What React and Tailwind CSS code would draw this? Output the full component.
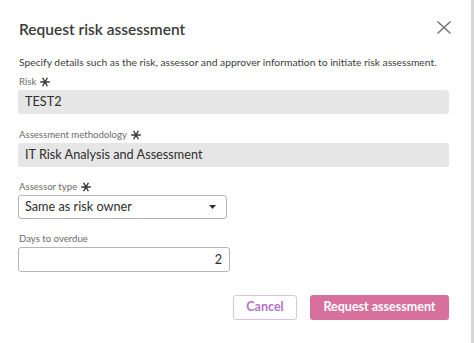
import React from "react";

const Star = () => (
  <svg width="10" height="10" viewBox="0 0 10 10" fill="none" stroke="#3a3a3a" strokeWidth="1.3" strokeLinecap="round">
    <path d="M0.6 5 H9.4 M2.8 1.2 L7.2 8.8 M7.2 1.2 L2.8 8.8" />
  </svg>
);

const Label = ({ children, required, className = "" }) => (
  <div className={`flex items-center gap-[4px] h-[10px] text-[9.6px] leading-none text-[#6b6b6b] ${className}`}>
    <span>{children}</span>
    {required && <Star />}
  </div>
);

const App = () => {
  return (
    <div
      className="w-[474px] h-[343px] bg-white border-r-[3px] border-[#d6d6d6] overflow-hidden"
      style={{ fontFamily: "Lato, 'Open Sans', sans-serif" }}
    >
      <div className="pl-[18px] pr-[22px]">
        <div className="flex items-start justify-between pt-[20px]">
          <h1 className="h-[20px] flex items-center pl-[1px] text-[15.5px] font-semibold text-[#3a3a3a] leading-none">
            Request risk assessment
          </h1>
          <button className="text-[#6f6f6f] mt-[1px] mr-[-2px]">
            <svg width="14" height="13" viewBox="0 0 14 13" fill="none" stroke="currentColor" strokeWidth="1.3">
              <path d="M0.5 0.5 L13.5 12.5 M13.5 0.5 L0.5 12.5" />
            </svg>
          </button>
        </div>

        <p className="mt-[16px] h-[12px] pl-[1px] flex items-center text-[10.3px] text-[#3c3c3c] leading-none whitespace-nowrap">
          Specify details such as the risk, assessor and approver information to initiate risk assessment.
        </p>

        <Label required className="mt-[9px] pl-[1px]">Risk</Label>
        <div className="mt-[3px] h-[24px] rounded-[3px] bg-[#e6e6e6] flex items-center px-[7px] text-[12.7px] text-[#2e2e2e]">
          TEST2
        </div>

        <Label required className="mt-[16px] pl-[1px]">Assessment methodology</Label>
        <div className="mt-[3px] h-[24px] rounded-[3px] bg-[#e6e6e6] flex items-center px-[7px] text-[12.7px] text-[#2e2e2e]">
          IT Risk Analysis and Assessment
        </div>

        <Label required className="mt-[15px] pl-[1px]">Assessor type</Label>
        <div className="mt-[3px] w-[209px] h-[24px] rounded-[3px] border border-[#b5b5b5] bg-white flex items-center justify-between pl-[6px] pr-[10px] text-[12.7px] text-[#2e2e2e]">
          <span>Same as risk owner</span>
          <svg width="7" height="4" viewBox="0 0 7 4">
            <path d="M0 0 L7 0 L3.5 4 Z" fill="#333" />
          </svg>
        </div>

        <Label className="mt-[15px] pl-[1px]">Days to overdue</Label>
        <div className="mt-[3px] w-[212px] h-[25px] rounded-[3px] border border-[#b5b5b5] bg-white flex items-center justify-end pr-[7px] text-[12.7px] text-[#2e2e2e]">
          2
        </div>

        <div className="mt-[23px] flex justify-end gap-[13px]">
          <button className="w-[64px] h-[25px] rounded-[3px] border border-[#dcc3e2] bg-white text-[12.5px] font-bold text-[#b672c5]">
            Cancel
          </button>
          <button className="w-[139px] h-[25px] rounded-[3px] bg-[#d8709e] text-[12.5px] font-bold text-white">
            Request assessment
          </button>
        </div>
      </div>
    </div>
  );
};

export default App;
